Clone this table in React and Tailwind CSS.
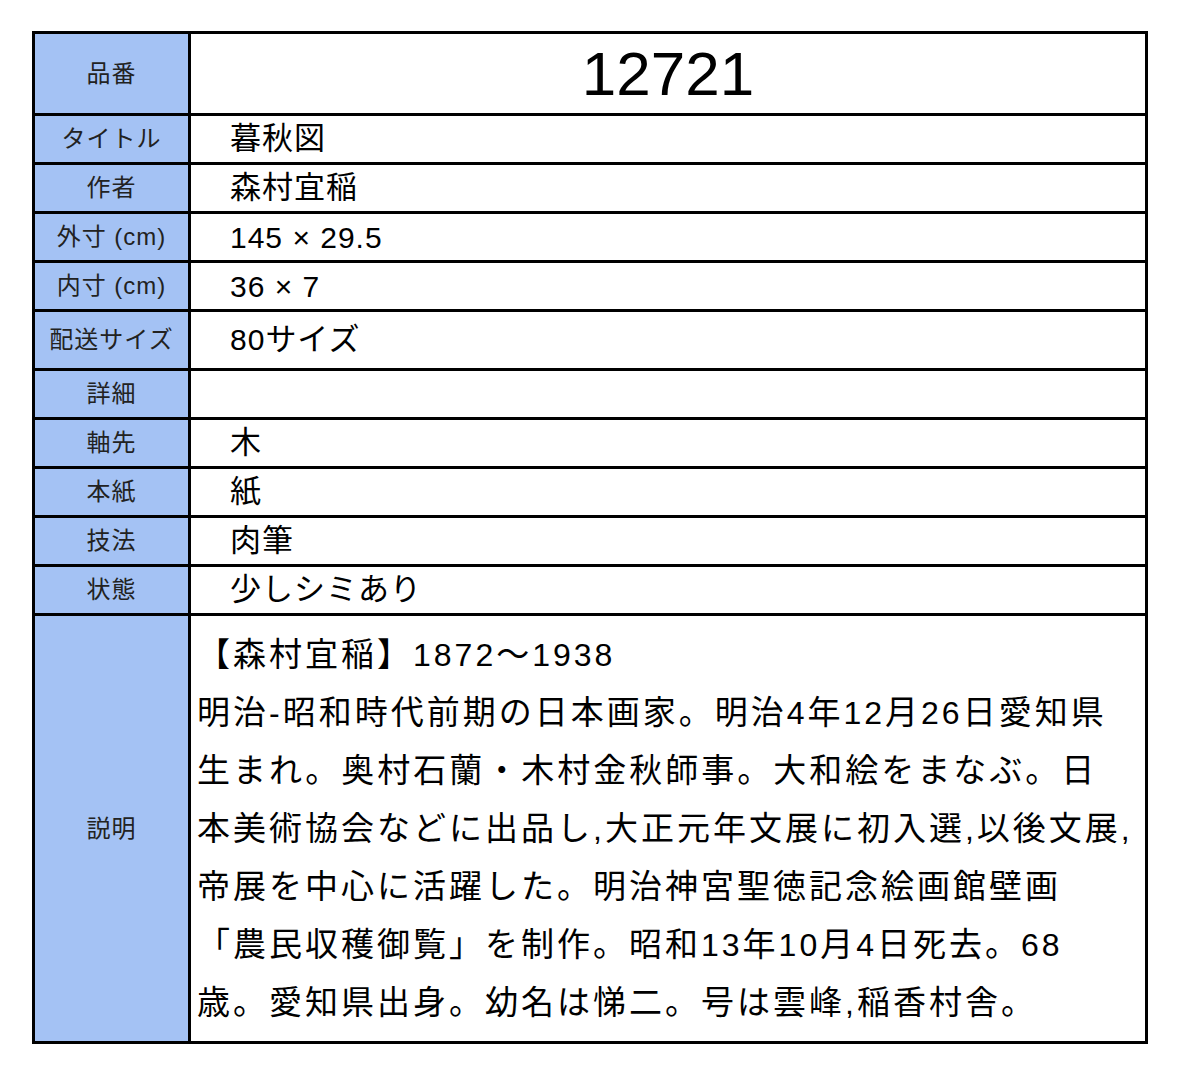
import React from 'react';

const ROWS = [
  { label: '品番', value: '12721', h: 'h-[82px]', big: true },
  { label: 'タイトル', value: '暮秋図', h: 'h-[49px]' },
  { label: '作者', value: '森村宜稲', h: 'h-[49px]' },
  { label: '外寸 (cm)', value: '145 × 29.5', h: 'h-[49px]' },
  { label: '内寸 (cm)', value: '36 × 7', h: 'h-[49px]' },
  { label: '配送サイズ', value: '80サイズ', h: 'h-[59px]' },
  { label: '詳細', value: '', h: 'h-[49px]' },
  { label: '軸先', value: '木', h: 'h-[49px]' },
  { label: '本紙', value: '紙', h: 'h-[49px]' },
  { label: '技法', value: '肉筆', h: 'h-[49px]' },
  { label: '状態', value: '少しシミあり', h: 'h-[49px]' },
];

// line breaks follow the sheet's wrapping
const DESCRIPTION = [
  '【森村宜稲】1872〜1938',
  '明治-昭和時代前期の日本画家。明治4年12月26日愛知県',
  '生まれ。奥村石蘭・木村金秋師事。大和絵をまなぶ。日',
  '本美術協会などに出品し,大正元年文展に初入選,以後文展,',
  '帝展を中心に活躍した。明治神宮聖徳記念絵画館壁画',
  '「農民収穫御覧」を制作。昭和13年10月4日死去。68',
  '歳。愛知県出身。幼名は悌二。号は雲峰,稲香村舎。',
];

// Japanese glyphs render a bit larger than the latin ones in the sheet
const CJK_RE = /([\u3000-\u9fff\uff00-\uffef]+)/;

function Mixed({ text, cjkClass }) {
  return text.split(CJK_RE).map((part, i) =>
    i % 2 === 1 ? (
      <span key={i} className={cjkClass}>
        {part}
      </span>
    ) : (
      part
    )
  );
}

function Label({ children }) {
  return (
    <div className="flex w-[156px] shrink-0 items-center justify-center border-r-[3px] border-black bg-[#a4c2f4] text-[24px] tracking-[1px] text-[#222]">
      {children}
    </div>
  );
}

function Row({ row }) {
  return (
    <div className={`flex border-b-[3px] border-black ${row.h}`}>
      <Label>{row.label}</Label>
      {row.big ? (
        <div className="flex flex-1 items-center justify-center text-[62px] leading-none">
          {row.value}
        </div>
      ) : (
        <div className="flex flex-1 items-center pl-[39px] text-[30px] tracking-[1px] whitespace-nowrap">
          <span>
            <Mixed text={row.value} cjkClass="text-[31px]" />
          </span>
        </div>
      )}
    </div>
  );
}

export default function App() {
  return (
    <div className="min-h-screen bg-white pt-[31px] pl-[32px] font-['Liberation_Sans','Noto_Sans_CJK_JP',sans-serif] text-black">
      <div className="w-[1116px] border-[3px] border-black">
        {ROWS.map((row) => (
          <Row key={row.label} row={row} />
        ))}
        <div className="flex h-[425px]">
          <Label>説明</Label>
          <div className="flex flex-1 flex-col justify-center pl-[6px] text-[32px] leading-[58px] tracking-[3px] whitespace-nowrap">
            {DESCRIPTION.map((line) => (
              <div key={line} className="h-[58px]">
                <Mixed text={line} cjkClass="text-[33px]" />
              </div>
            ))}
          </div>
        </div>
      </div>
    </div>
  );
}
